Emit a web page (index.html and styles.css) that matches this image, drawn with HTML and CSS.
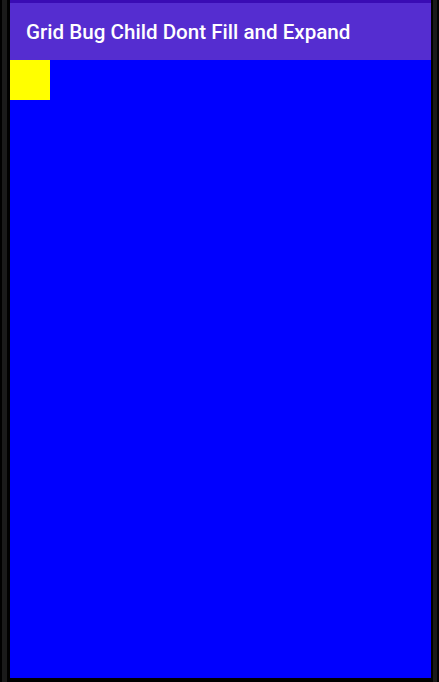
FILE: index.html
```html
<!DOCTYPE html>
<html>
<head>
<meta charset="utf-8">
<link rel="stylesheet" href="styles.css">
</head>
<body>
<div class="device">
  <div class="screen">
    <div class="status-bar"></div>
    <header class="app-bar">
      <h1 class="title">Grid Bug Child Dont Fill and Expand</h1>
    </header>
    <main class="content">
      <div class="grid">
        <div class="cell"></div>
      </div>
    </main>
  </div>
</div>
</body>
</html>
```

FILE: styles.css
```css
html, body {
  margin: 0;
  padding: 0;
  height: 100%;
  background: #000;
}
.device {
  width: 439px;
  height: 682px;
  box-sizing: border-box;
  padding: 0 8px 4px 10px;
  background: linear-gradient(to right, #000 0 2px, #1a1a1a 2px 7px, #000 7px 10px, transparent 10px calc(100% - 8px), #000 calc(100% - 8px) calc(100% - 6px), #1a1a1a calc(100% - 6px) calc(100% - 2px), #000 calc(100% - 2px));
}
.screen {
  height: 100%;
  display: flex;
  flex-direction: column;
  background: #0000ff;
}
.status-bar {
  height: 3px;
  background: #3a0cb4;
}
.app-bar {
  height: 57px;
  background: #552dd0;
  display: flex;
  align-items: center;
  padding-left: 16px;
}
.title {
  margin: 0;
  font-family: Roboto, "Noto Sans", sans-serif;
  font-weight: 500;
  font-size: 20.6px;
  color: #fff;
}
.content {
  flex: 1;
}
.grid {
  display: grid;
  grid-template-columns: 40px;
  grid-template-rows: 40px;
}
.cell {
  background: #ffff00;
}
```
